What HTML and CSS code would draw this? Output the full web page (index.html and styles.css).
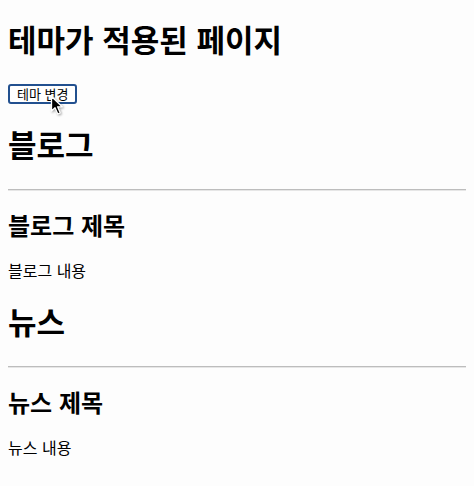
FILE: index.html
```html
<!DOCTYPE html>
<html lang="ko">
<head>
<meta charset="utf-8">
<link rel="stylesheet" href="styles.css">
</head>
<body>
<h1 class="title">테마가 적용된 페이지</h1>
<div class="btn-wrap">
  <button class="theme-btn">테마 변경</button>
  <svg class="cursor" width="15" height="21" viewBox="0 0 15 21"><path d="M1.5 1.5 L1.5 16 L5 12.8 L7.8 19 L10.3 17.9 L7.6 11.8 L12.2 11.8 Z" fill="#000" stroke="#fff" stroke-width="1.3" stroke-linejoin="round"/></svg>
</div>
<section class="block">
  <h1 class="sec-title">블로그</h1>
  <hr class="rule">
  <h2 class="item-title">블로그 제목</h2>
  <p class="item-body">블로그 내용</p>
</section>
<section class="block">
  <h1 class="sec-title">뉴스</h1>
  <hr class="rule">
  <h2 class="item-title">뉴스 제목</h2>
  <p class="item-body">뉴스 내용</p>
</section>
</body>
</html>
```
FILE: styles.css
```css
html { background: #fdfdfd; }
body {
  margin: 8px;
  font-family: "Noto Sans CJK KR", "Noto Sans", sans-serif;
  color: #000;
}
h1 {
  font-size: 31px;
  line-height: 38px;
  font-weight: 700;
  margin: 21px 0 0;
}
.title { margin-top: 12px; }
h2 {
  font-size: 24px;
  line-height: 30px;
  font-weight: 700;
  margin: 19px 0 0;
}
p {
  font-size: 16px;
  line-height: 22px;
  margin: 19px 0 0;
}
.btn-wrap {
  position: relative;
  display: flex;
  margin-top: 26px;
}
.theme-btn {
  font-family: "Noto Sans CJK KR", sans-serif;
  font-size: 13px;
  line-height: 16px;
  height: 20px;
  padding: 0 7px;
  background: #fff;
  border: 2px solid #22508f;
  border-radius: 3px;
  color: #000;
}
.cursor {
  position: absolute;
  left: 42px;
  top: 11px;
  filter: drop-shadow(1px 1px 1px rgba(0,0,0,0.35));
}
.rule {
  border: 0;
  border-top: 1px solid #bdbdbd;
  border-bottom: 1px solid #e6e6e6;
  margin: 26px 0 0;
  width: calc(100% + 8px);
}
```
